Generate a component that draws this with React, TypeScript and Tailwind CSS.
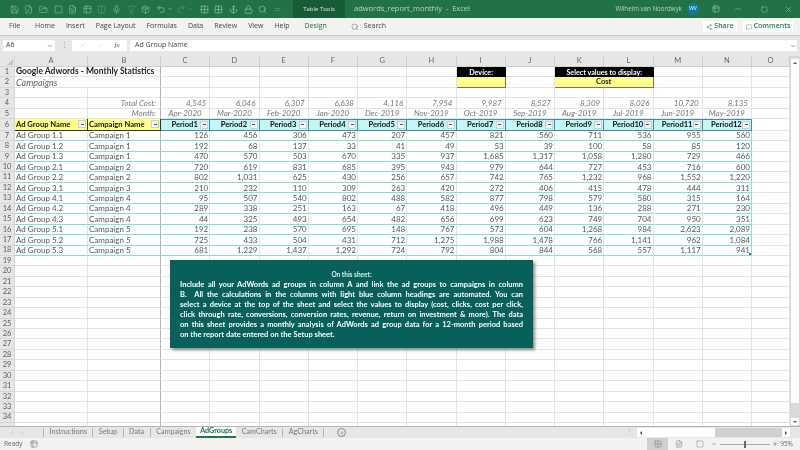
import {
  Anchor,
  Check,
  ChevronDown,
  ChevronLeft,
  ChevronRight,
  Columns2,
  Equal,
  FilePen,
  FileText,
  Filter,
  FolderOpen,
  Grid2x2,
  Lock,
  MessageSquare,
  Mic,
  Minus,
  Package,
  Plus,
  Redo2,
  Save,
  Search,
  Share2,
  Square,
  Table2,
  Undo2,
  X,
} from "lucide-react";

const cols = ["A", "B", "C", "D", "E", "F", "G", "H", "I", "J", "K", "L", "M", "N", "O"];
const totals = ["4,545", "6,046", "6,307", "6,638", "4,116", "7,954", "9,987", "8,527", "8,309", "8,026", "10,720", "8,135"];
const months = ["Apr-2020", "Mar-2020", "Feb-2020", "Jan-2020", "Dec-2019", "Nov-2019", "Oct-2019", "Sep-2019", "Aug-2019", "Jul-2019", "Jun-2019", "May-2019"];

const rows = [
  ["Ad Group 1.1", "Campaign 1", "126", "456", "306", "473", "207", "457", "821", "560", "711", "536", "955", "560"],
  ["Ad Group 1.2", "Campaign 1", "192", "68", "137", "33", "41", "49", "53", "39", "100", "58", "85", "120"],
  ["Ad Group 1.3", "Campaign 1", "470", "570", "503", "670", "335", "937", "1,685", "1,317", "1,058", "1,280", "729", "466"],
  ["Ad Group 2.1", "Campaign 2", "720", "619", "831", "685", "395", "943", "979", "644", "727", "453", "716", "600"],
  ["Ad Group 2.2", "Campaign 2", "802", "1,031", "625", "430", "256", "657", "742", "765", "1,232", "968", "1,552", "1,220"],
  ["Ad Group 3.1", "Campaign 3", "210", "232", "110", "309", "263", "420", "272", "406", "415", "478", "444", "311"],
  ["Ad Group 4.1", "Campaign 4", "95", "507", "540", "802", "488", "582", "877", "798", "579", "580", "315", "164"],
  ["Ad Group 4.2", "Campaign 4", "289", "338", "251", "163", "67", "418", "496", "449", "136", "288", "271", "230"],
  ["Ad Group 4.3", "Campaign 4", "44", "325", "493", "654", "482", "656", "699", "623", "749", "704", "950", "351"],
  ["Ad Group 5.1", "Campaign 5", "192", "238", "570", "695", "148", "767", "573", "604", "1,268", "984", "2,623", "2,089"],
  ["Ad Group 5.2", "Campaign 5", "725", "433", "504", "431", "712", "1,275", "1,988", "1,478", "766", "1,141", "962", "1,084"],
  ["Ad Group 5.3", "Campaign 5", "681", "1,229", "1,437", "1,292", "724", "792", "804", "844", "568", "557", "1,117", "941"],
];

const noteLines = [
  "Include all your AdWords ad groups in column A and link the ad groups to campaigns in column",
  "B.  All the calculations in the columns with light blue column headings are automated. You can",
  "select a device at the top of the sheet and select the values to display (cost, clicks, cost per click,",
  "click through rate, conversions, conversion rates, revenue, return on investment & more). The data",
  "on this sheet provides a monthly analysis of AdWords ad group data for a 12-month period based",
];

const quickAccess = [Save, FilePen, FolderOpen, Square, FileText, Table2, Columns2, Mic, Filter, Package];
const quickAccess2 = [Grid2x2, Grid2x2, Anchor, Lock, Search, Equal];
const menu = ["Home", "Insert", "Page Layout", "Formulas", "Data", "Review", "View", "Help"];

function RowHead({ n }: { n?: number }) {
  return (
    <div className="flex items-center justify-center overflow-hidden border-r border-b border-[#d6d6d6] bg-[#e6e6e6] text-[7.5px] text-[#5c5c5c]">
      {n}
    </div>
  );
}

function Blank({ col }: { col: number }) {
  return <div className={col === 1 ? "border-r border-b border-r-[#b4b4b4] border-b-[#e4e4e4]" : "border-r border-b border-[#e4e4e4]"} />;
}

function FilterButton() {
  return (
    <span className="mr-[1px] flex h-[8px] w-[8px] shrink-0 items-center justify-center border border-[#cfcfcf] bg-[#f4f4f4]">
      <span className="h-[1px] w-[3px] bg-[#555]" />
    </span>
  );
}

function Sheet() {
  return (
    <div className="relative min-w-0 flex-1 overflow-hidden bg-white">
      <div className="grid grid-cols-[15px_73px_73px_repeat(12,49.25px)_38px] grid-rows-[11px_repeat(5,10.45px)_11.5px_repeat(29,10.45px)] text-[8px] leading-none text-[#555]">
        {/* column letters */}
        <div className="flex items-end justify-end border-r border-b border-[#d6d6d6] bg-[#e6e6e6] p-[1px]">
          <div className="h-0 w-0 border-b-[6px] border-l-[6px] border-b-[#c4c4c4] border-l-transparent" />
        </div>
        {cols.map((c) => (
          <div key={c} className="flex items-center justify-center border-r border-b border-[#d0d0d0] bg-[#e6e6e6] text-[7.5px] text-[#666]">
            {c}
          </div>
        ))}

        {/* row 1 */}
        <RowHead n={1} />
        <div className="col-span-2 flex items-center whitespace-nowrap border-r border-b border-r-[#b4b4b4] border-b-[#e4e4e4] pl-[1px] text-[8.5px] font-bold text-[#222]">
          Google Adwords - Monthly Statistics
        </div>
        {[2, 3, 4, 5, 6, 7].map((i) => <Blank key={i} col={i} />)}
        <div className="flex items-center justify-center bg-black text-[7.2px] font-bold text-white">Device:</div>
        <Blank col={9} />
        <div className="col-span-2 flex items-center justify-center bg-black text-[7.2px] font-bold text-white">Select values to display:</div>
        {[12, 13, 14].map((i) => <Blank key={i} col={i} />)}

        {/* row 2 */}
        <RowHead n={2} />
        <div className="flex items-center whitespace-nowrap border-b border-[#e4e4e4] pl-[1px] text-[9px] italic text-[#666]">Campaigns</div>
        <Blank col={1} />
        {[2, 3, 4, 5, 6, 7].map((i) => <Blank key={i} col={i} />)}
        <div className="border-r border-b border-[#77775c] bg-[#ffff8c]" />
        <Blank col={9} />
        <div className="col-span-2 flex items-center justify-center border-r border-b border-[#77775c] bg-[#ffff8c] text-[7.5px] font-bold text-[#222]">Cost</div>
        {[12, 13, 14].map((i) => <Blank key={i} col={i} />)}

        {/* row 3 */}
        <RowHead n={3} />
        {cols.map((c, i) => <Blank key={c} col={i} />)}

        {/* row 4 */}
        <RowHead n={4} />
        <Blank col={0} />
        <div className="flex items-center justify-end border-r border-b border-r-[#b4b4b4] border-b-[#e4e4e4] pr-[4px] italic text-[#777]">Total Cost:</div>
        {totals.map((t) => (
          <div key={t} className="flex items-center justify-end border-r border-b border-[#e4e4e4] pr-[3px] italic text-[#777]">{t}</div>
        ))}
        <Blank col={14} />

        {/* row 5 */}
        <RowHead n={5} />
        <Blank col={0} />
        <div className="flex items-center justify-end border-r border-b border-r-[#b4b4b4] border-b-[#e4e4e4] pr-[4px] italic text-[#777]">Month:</div>
        {months.map((m) => (
          <div key={m} className="flex items-center justify-center border-r border-b border-[#e4e4e4] italic text-[#777]">{m}</div>
        ))}
        <Blank col={14} />

        {/* row 6, table headings */}
        <RowHead n={6} />
        {["Ad Group Name", "Campaign Name"].map((h) => (
          <div key={h} className="flex items-center justify-between border-r border-b border-[#333] bg-[#ffff8c] pl-[1px] text-[7.6px] font-bold whitespace-nowrap text-[#111]">
            {h}
            <FilterButton />
          </div>
        ))}
        {months.map((_, i) => (
          <div key={i} className="flex items-center border-t border-r border-b border-[#3f8f94] bg-[#c4f6f8] text-[7.6px] font-bold whitespace-nowrap text-[#111]">
            <span className="flex-1 pl-[8px] text-center">Period{i + 1}</span>
            <FilterButton />
          </div>
        ))}
        <Blank col={14} />

        {/* rows 7 to 18 */}
        {rows.map((row, r) => (
          <div key={r} className="contents">
            <RowHead n={r + 7} />
            {row.map((value, c) => (
              <div
                key={c}
                className={
                  c < 2
                    ? c === 1
                      ? "flex items-center border-r border-b border-r-[#b4b4b4] border-b-[#7fe3da] pl-[1px] whitespace-nowrap"
                      : "flex items-center border-r border-b border-r-[#e4e4e4] border-b-[#7fe3da] pl-[1px] whitespace-nowrap"
                    : c === 13
                      ? "relative flex items-center justify-end border-r border-b border-[#7fe3da] pr-[1px]"
                      : "flex items-center justify-end border-r border-b border-r-[#e4e4e4] border-b-[#7fe3da] pr-[1px]"
                }
              >
                {value}
                {r === 11 && c === 13 && <span className="absolute right-0 bottom-0 h-[2px] w-[2px] bg-[#2a5fc0]" />}
              </div>
            ))}
            <Blank col={14} />
          </div>
        ))}

        {/* rows 19 to 35 */}
        {Array.from({ length: 17 }, (_, r) => (
          <div key={r} className="contents">
            <RowHead n={r + 19 < 35 ? r + 19 : undefined} />
            {cols.map((c, i) => <Blank key={c} col={i} />)}
          </div>
        ))}
      </div>

      {/* note shape over the cells */}
      <div className="absolute top-[204px] left-[170px] flex h-[88px] w-[363px] flex-col bg-[#07605a] px-[10px] pt-[11px] text-[7.5px] leading-[10px] font-bold text-white shadow-[2px_2px_3px_rgba(0,0,0,0.45)]">
        <div className="mb-[1px] text-center text-[6.5px] leading-[8px] text-[#d6f0ea]">On this sheet:</div>
        {noteLines.map((line) => (
          <div key={line} className="whitespace-pre-wrap text-justify [text-align-last:justify]">{line}</div>
        ))}
        <div>on the report date entered on the Setup sheet.</div>
      </div>
    </div>
  );
}

export default function App() {
  return (
    <div className="flex h-[450px] w-[800px] flex-col overflow-hidden bg-[#e6e6e6] font-['Lato','Open_Sans',sans-serif] blur-[0.3px]">
      {/* title bar */}
      <div className="flex h-[18px] shrink-0 items-center bg-[#217346] text-[7.5px] text-[#b9d5c4] font-['Open_Sans',sans-serif]">
        <div className="flex w-[293px] shrink-0 items-center pl-[7px] text-[#a9cdb7]">
          {quickAccess.map((Icon, i) => (
            <span key={i} className="flex w-[14.6px] justify-center">
              <Icon size={9} strokeWidth={1.3} className={i === 6 || i === 8 ? "opacity-50" : ""} />
            </span>
          ))}
          <Undo2 size={10} strokeWidth={1.4} className="ml-[3px]" />
          <ChevronDown size={6} className="ml-[1px]" />
          <Redo2 size={10} strokeWidth={1.4} className="ml-[3px] opacity-50" />
          <ChevronDown size={6} className="ml-[1px] opacity-50" />
          <span className="w-[4px]" />
          {quickAccess2.map((Icon, i) => (
            <span key={i} className="flex w-[14.6px] justify-center">
              <Icon size={9} strokeWidth={1.5} className={i === 5 ? "opacity-50" : ""} />
            </span>
          ))}
        </div>
        <div className="flex h-full w-[52px] shrink-0 items-center justify-center bg-[#185c37] text-[6px] text-[#d5e6db]">Table Tools</div>
        <span className="ml-[9px] whitespace-nowrap">adwords_report_monthly&nbsp; -&nbsp; Excel</span>
        <span className="ml-auto whitespace-nowrap text-[6.2px]">Wilhelm van Noordwyk</span>
        <span className="ml-[5px] flex h-[12px] w-[12px] items-center justify-center rounded-full bg-[#0e7d9b] text-[5px] text-white">WV</span>
        <span className="ml-[12px] flex w-[10px] justify-center"><Table2 size={8} strokeWidth={1.4} /></span>
        <span className="ml-[12px] flex w-[10px] justify-center"><Minus size={8} strokeWidth={1.4} /></span>
        <span className="ml-[16px] flex w-[10px] justify-center"><Square size={7} strokeWidth={1.4} /></span>
        <span className="ml-[14px] mr-[7px] flex w-[10px] justify-center"><X size={9} strokeWidth={1.4} /></span>
      </div>

      {/* menu */}
      <div className="flex h-[17px] shrink-0 items-center bg-[#f3f2f1] pl-[9px] text-[7px] text-[#444] shadow-[0_1px_1px_rgba(0,0,0,0.12)] font-['Open_Sans',sans-serif]">
        <span className="mr-[15px]">File</span>
        <div className="flex gap-[11px] whitespace-nowrap">
          {menu.map((m) => <span key={m}>{m}</span>)}
          <span className="ml-[4px] text-[#217346]">Design</span>
        </div>
        <Search size={8} strokeWidth={1.4} className="ml-[24px] text-[#555]" />
        <span className="ml-[5px]">Search</span>
        <div className="ml-auto mr-[7px] flex items-center gap-[6px] font-semibold text-[#2c7a55]">
          <span className="flex h-[11px] w-[34px] items-center justify-center gap-[2px] bg-white"><Share2 size={6} strokeWidth={1.5} />Share</span>
          <span className="flex h-[11px] w-[50px] items-center justify-center gap-[2px] bg-white"><MessageSquare size={6} strokeWidth={1.5} />Comments</span>
        </div>
      </div>

      {/* formula bar */}
      <div className="flex h-[21px] shrink-0 items-center pl-[3px] text-[7px] text-[#444] font-['Open_Sans',sans-serif]">
        <div className="flex h-[11px] w-[52px] items-center justify-between bg-white pr-[2px] pl-[3px]">
          A6
          <ChevronDown size={6} strokeWidth={2} />
        </div>
        <span className="ml-[6px] w-[11px] text-[#999]">⋮</span>
        <div className="flex h-[11px] w-[55px] items-center justify-around bg-white px-[2px] text-[#777]">
          <X size={7} strokeWidth={1.2} className="text-[#bbb]" />
          <Check size={7} strokeWidth={1.2} className="text-[#bbb]" />
          <span className="font-['Liberation_Serif',serif] italic text-[#555]">fx</span>
        </div>
        <div className="ml-[3px] flex h-[11px] w-[667px] items-center justify-between bg-white pr-[1px] pl-[5px]">
          Ad Group Name
          <ChevronDown size={6} strokeWidth={2} />
        </div>
      </div>

      {/* sheet and vertical scrollbar */}
      <div className="flex min-h-0 flex-1">
        <Sheet />
        <div className="flex w-[10px] shrink-0 flex-col bg-[#d9d9d9] px-[1px] pt-[3px] pb-[1px]">
          <span className="flex h-[7px] items-center justify-center bg-white text-[#555]"><span className="h-0 w-0 border-x-[2px] border-b-[2px] border-x-transparent border-b-[#555]" /></span>
          <span className="h-[337px] bg-white" />
          <span className="mt-auto flex h-[7px] items-center justify-center bg-white"><span className="h-0 w-0 border-x-[2px] border-t-[2px] border-x-transparent border-t-[#555]" /></span>
        </div>
      </div>

      {/* sheet tabs */}
      <div className="flex h-[12px] shrink-0 items-center border-t border-[#b5b5b5] bg-[#e6e6e6] text-[7.2px] text-[#777] font-['Lato',sans-serif]">
        <div className="flex w-[43px] shrink-0 items-center gap-[4px] pl-[9px] text-[#aaa]">
          <ChevronLeft size={6} /><ChevronRight size={6} />
        </div>
        {["Instructions", "Setup", "Data", "Campaigns"].map((t) => (
          <span key={t} className="flex h-[9px] items-center whitespace-nowrap border-l border-[#b5b5b5] px-[5.5px]">{t}</span>
        ))}
        <span className="flex h-full items-center border-b-2 border-[#217346] bg-white px-[4px] font-bold text-[#217346]">AdGroups</span>
        <span className="flex h-[9px] items-center whitespace-nowrap px-[5.5px]">CamCharts</span>
        <span className="flex h-[9px] items-center whitespace-nowrap border-l border-[#b5b5b5] px-[5.5px]">AgCharts</span>
        <span className="h-[9px] border-l border-[#b5b5b5]" />
        <span className="ml-[13px] flex h-[9px] w-[9px] items-center justify-center rounded-full border border-[#888]"><Plus size={6} strokeWidth={1.5} /></span>
        <span className="ml-auto text-[#aaa]">⋮</span>
        <div className="mr-[10px] ml-[4px] flex h-[9px] w-[153px] items-center bg-[#d0d0d0]">
          <span className="flex h-full w-[8px] items-center justify-center bg-white"><span className="h-0 w-0 border-y-[2px] border-r-[2px] border-y-transparent border-r-[#444]" /></span>
          <span className="h-full w-[70px] bg-white" />
          <span className="ml-auto flex h-full w-[8px] items-center justify-center bg-white"><span className="h-0 w-0 border-y-[2px] border-l-[2px] border-y-transparent border-l-[#444]" /></span>
        </div>
      </div>

      {/* status bar */}
      <div className="flex h-[12px] shrink-0 items-center bg-[#f3f2f1] pl-[4px] text-[6.5px] text-[#666] font-['Open_Sans',sans-serif]">
        Ready
        <Table2 size={8} strokeWidth={1.5} className="ml-[7px]" />
        <div className="ml-auto flex h-full items-center">
          <span className="flex h-full w-[21px] items-center justify-center bg-[#d0d0d0]"><Grid2x2 size={8} strokeWidth={1.2} /></span>
          <span className="flex w-[21px] justify-center"><FileText size={8} strokeWidth={1.2} /></span>
          <span className="flex w-[21px] justify-center"><Square size={8} strokeWidth={1.2} /></span>
          <Minus size={6} className="ml-[1px]" />
          <div className="relative ml-[3px] h-[1px] w-[50px] bg-[#aaa]">
            <span className="absolute top-[-3px] left-[24px] h-[7px] w-[2px] bg-[#666]" />
          </div>
          <Plus size={6} className="ml-[2px]" />
          <span className="mr-[7px] ml-[2px]">95%</span>
        </div>
      </div>
    </div>
  );
}
